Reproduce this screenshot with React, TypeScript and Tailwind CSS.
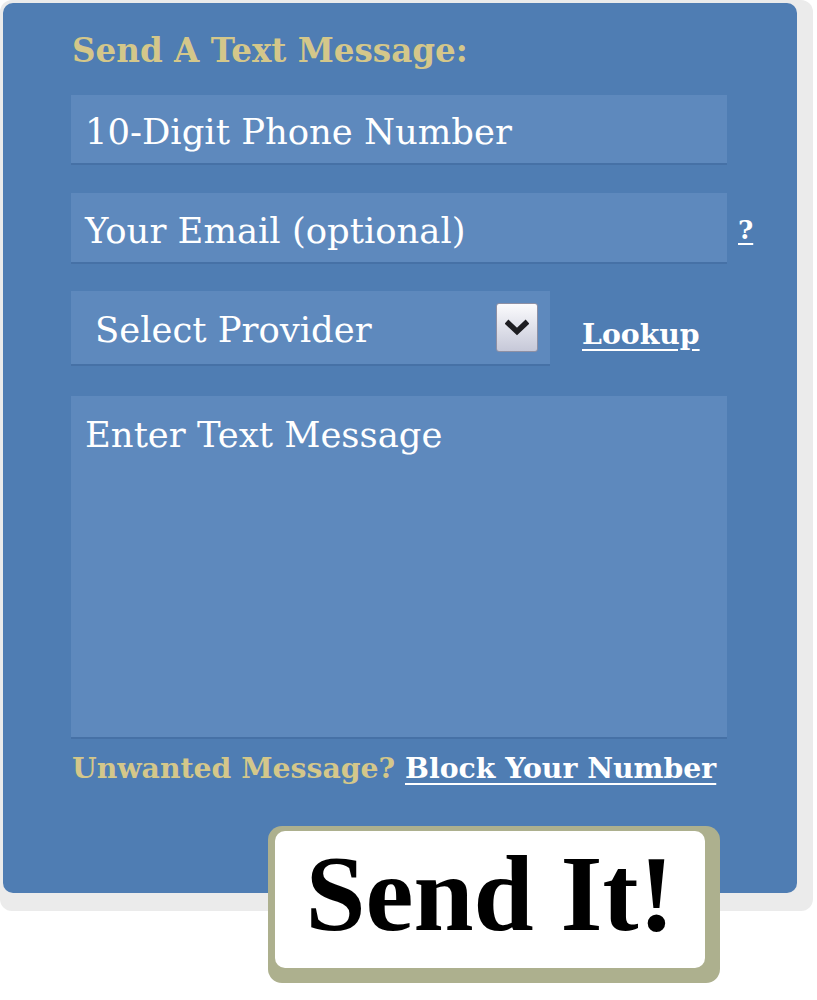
import React from "react";

const serif = "font-['DejaVu_Serif',serif]";

function Field({ children, className = "" }: { children: React.ReactNode; className?: string }) {
  return (
    <div className={`shrink-0 bg-[#5e89bd] shadow-[0_2px_0_#4671a6] ${className}`}>{children}</div>
  );
}

export default function App() {
  return (
    <div className={`w-[817px] h-[1000px] bg-white ${serif}`}>
      <div className="w-[813px] h-[911px] bg-[#ebebeb] rounded-[12px] pt-[3px] pl-[3px]">
        <div className="w-[794px] h-[890px] bg-[#4f7db3] rounded-[10px] pl-[68px] pt-[31px]">
          <h1 className="text-[32.6px] leading-[33px] font-bold text-[#d4c78a] pl-[1px]">
            Send A Text Message:
          </h1>

          <Field className="mt-[28px] w-[656px] h-[68px] pl-[14px] pt-[20px]">
            <div className="text-[35.4px] leading-[34px] text-white">10-Digit Phone Number</div>
          </Field>

          <div className="mt-[30px] flex items-start">
            <Field className="w-[656px] h-[69px] pl-[14px] pt-[21px]">
              <div className="text-[35.4px] leading-[34px] text-white">Your Email (optional)</div>
            </Field>
            <a className="ml-[11px] mt-[25px] text-[26px] leading-[25px] font-bold text-white underline underline-offset-[4px] decoration-2">
              ?
            </a>
          </div>

          <div className="mt-[29px] flex items-start">
            <Field className="w-[479px] h-[73px] pl-[24px] pt-[22px] flex items-start justify-between pr-[12px]">
              <div className="text-[35.4px] leading-[34px] text-white">Select Provider</div>
              <div className="-mt-[10px] w-[42px] h-[49px] rounded-[3px] border border-[#8e90a4] bg-gradient-to-b from-[#fbfbfd] to-[#c6c8d8] flex items-center justify-center">
                <svg width="24" height="18" viewBox="0 0 24 18">
                  <path d="M3.5 4.5 L12 12.5 L20.5 4.5" fill="none" stroke="#1e1e22" strokeWidth="5.5" strokeLinecap="square" />
                </svg>
              </div>
            </Field>
            <a className="ml-[32px] mt-[29px] text-[28.3px] leading-[28px] font-bold text-white underline underline-offset-[5px] decoration-2">
              Lookup
            </a>
          </div>

          <Field className="mt-[32px] w-[656px] h-[341px] pl-[14px] pt-[22px]">
            <div className="text-[35.4px] leading-[34px] text-white">Enter Text Message</div>
          </Field>

          <div className="mt-[17px] text-[28.3px] leading-[28px] font-bold pl-[1px]">
            <span className="text-[#d4c78a]">Unwanted Message?</span>{" "}
            <a className="text-white underline underline-offset-[5px] decoration-2">Block Your Number</a>
          </div>

          <div className="relative mt-[44px] ml-[197px] w-[452px] h-[157px] rounded-[14px] bg-[#adb08e] pt-[5px] pl-[7px] pr-[15px] pb-[15px]">
            <div className="w-full h-full bg-white rounded-[10px] flex justify-center pt-[10px]">
              <span className="font-['Liberation_Serif',serif] font-bold text-[108px] leading-[106px] text-black">
                Send It!
              </span>
            </div>
          </div>
        </div>
      </div>
    </div>
  );
}
